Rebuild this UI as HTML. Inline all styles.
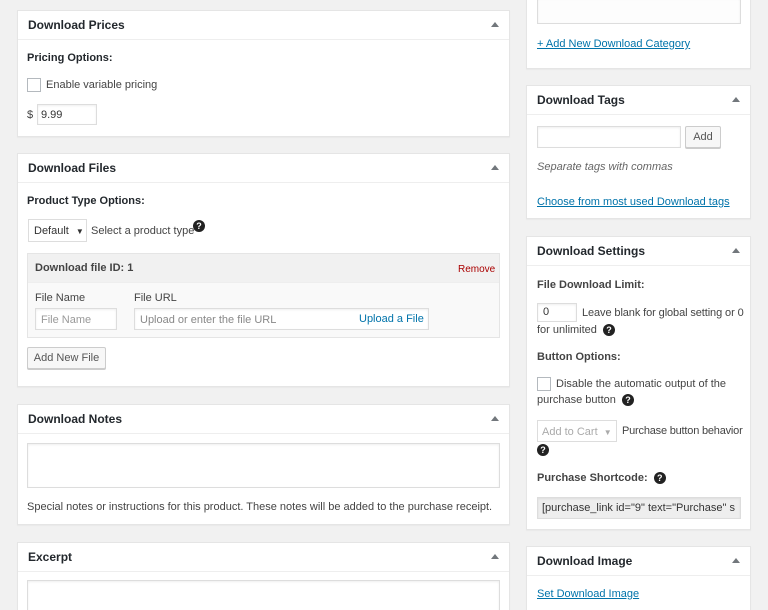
<!DOCTYPE html>
<html style="overflow:hidden;width:768px;height:610px"><head><meta charset="utf-8"><style>
*{box-sizing:border-box;margin:0;padding:0}
body{width:768px;height:610px;overflow:hidden;background:#f1f1f1;font-family:"Liberation Sans",sans-serif;font-size:11px;color:#444;position:relative}
.p{position:absolute;background:#fff;border:1px solid #e5e5e5;box-shadow:0 1px 1px rgba(0,0,0,.04)}
.h{position:absolute;left:0;right:0;top:0;border-bottom:1px solid #eee;font-size:12px;font-weight:bold;color:#23282d;padding-left:10px}
.h:after{content:"";position:absolute;right:10px;top:50%;margin-top:-3px;border-left:4px solid transparent;border-right:4px solid transparent;border-bottom:5px solid #72777c}
.a{position:absolute;white-space:nowrap}
.in{position:absolute;border:1px solid #ddd;box-shadow:inset 0 1px 2px rgba(0,0,0,.07);background:#fff}
.b{font-weight:bold;color:#23282d}
.lk{color:#0073aa;text-decoration:underline}
.q{display:inline-block;width:12px;height:12px;border-radius:50%;background:#222;color:#fff;font-size:9px;font-weight:bold;text-align:center;line-height:12px;vertical-align:middle}
.btn{position:absolute;border:1px solid #ccc;background:#f7f7f7;box-shadow:0 1px 0 #ccc;border-radius:2px;text-align:center;color:#555}
.cb{position:absolute;width:14px;height:14px;border:1px solid #b4b9be;background:#fff}
</style></head><body>

<!-- Download Prices -->
<div class="p" style="left:17px;top:10px;width:493px;height:127px">
<div class="h" style="height:29px;line-height:29px">Download Prices</div>
</div>
<div class="a b" style="left:27px;top:52px">Pricing Options:</div>
<div class="cb" style="left:27px;top:78px"></div>
<div class="a" style="left:46px;top:79px">Enable variable pricing</div>
<div class="a" style="left:27px;top:109px">$</div>
<div class="in" style="left:37px;top:104px;width:60px;height:21px"></div>
<div class="a" style="left:41px;top:109px;color:#333">9.99</div>

<!-- Download Files -->
<div class="p" style="left:17px;top:153px;width:493px;height:234px">
<div class="h" style="height:29px;line-height:29px">Download Files</div>
</div>
<div class="a b" style="left:27px;top:195px">Product Type Options:</div>
<div class="in" style="left:28px;top:219px;width:59px;height:23px;box-shadow:none"></div>
<div class="a" style="left:34px;top:225px;color:#333">Default <span style="font-size:8px;margin-left:4px">▼</span></div>
<div class="a" style="left:91px;top:225px">Select a product type</div>
<div class="a" style="left:193px;top:220px"><span class="q">?</span></div>
<div style="position:absolute;left:27px;top:253px;width:473px;height:85px;border:1px solid #e5e5e5;background:#f9f9f9"></div>
<div style="position:absolute;left:28px;top:254px;width:471px;height:29px;background:#f1f1f1;border-bottom:1px solid #eee"></div>
<div class="a b" style="left:35px;top:262px;color:#444">Download file ID: 1</div>
<div class="a" style="left:458px;top:264px;color:#a00;font-size:10px">Remove</div>
<div class="a" style="left:35px;top:292px">File Name</div>
<div class="a" style="left:134px;top:292px">File URL</div>
<div class="in" style="left:35px;top:308px;width:82px;height:22px"></div>
<div class="a" style="left:41px;top:314px;color:#999">File Name</div>
<div class="in" style="left:134px;top:308px;width:295px;height:22px"></div>
<div class="a" style="left:140px;top:314px;color:#888">Upload or enter the file URL</div>
<div class="a" style="left:359px;top:313px;color:#0073aa">Upload a File</div>
<div class="btn" style="left:27px;top:347px;width:79px;height:22px;line-height:20px">Add New File</div>

<!-- Download Notes -->
<div class="p" style="left:17px;top:404px;width:493px;height:121px">
<div class="h" style="height:29px;line-height:29px">Download Notes</div>
</div>
<div class="in" style="left:27px;top:443px;width:473px;height:45px"></div>
<div class="a" style="left:27px;top:501px">Special notes or instructions for this product. These notes will be added to the purchase receipt.</div>

<!-- Excerpt -->
<div class="p" style="left:17px;top:542px;width:493px;height:80px">
<div class="h" style="height:29px;line-height:29px">Excerpt</div>
</div>
<div class="in" style="left:27px;top:580px;width:473px;height:40px"></div>

<!-- right top -->
<div class="p" style="left:526px;top:-5px;width:225px;height:74px"></div>
<div class="in" style="left:537px;top:-3px;width:204px;height:27px;background:#fdfdfd"></div>
<div class="a lk" style="left:537px;top:38px">+ Add New Download Category</div>

<!-- Download Tags -->
<div class="p" style="left:526px;top:85px;width:225px;height:134px">
<div class="h" style="height:29px;line-height:29px">Download Tags</div>
</div>
<div class="in" style="left:537px;top:126px;width:144px;height:22px"></div>
<div class="btn" style="left:685px;top:126px;width:36px;height:22px;line-height:20px">Add</div>
<div class="a" style="left:537px;top:161px;font-style:italic;color:#666">Separate tags with commas</div>
<div class="a lk" style="left:537px;top:196px">Choose from most used Download tags</div>

<!-- Download Settings -->
<div class="p" style="left:526px;top:236px;width:225px;height:294px">
<div class="h" style="height:29px;line-height:29px">Download Settings</div>
</div>
<div class="a b" style="left:537px;top:279px;color:#444">File Download Limit:</div>
<div class="in" style="left:537px;top:303px;width:40px;height:19px"></div>
<div class="a" style="left:543px;top:306px;color:#333">0</div>
<div class="a" style="left:582px;top:307px;letter-spacing:-0.1px">Leave blank for global setting or 0</div>
<div class="a" style="left:537px;top:324px">for unlimited <span class="q" style="margin-left:3px">?</span></div>
<div class="a b" style="left:537px;top:351px;color:#444">Button Options:</div>
<div class="cb" style="left:537px;top:377px"></div>
<div class="a" style="left:556px;top:378px">Disable the automatic output of the</div>
<div class="a" style="left:537px;top:394px">purchase button <span class="q" style="margin-left:3px">?</span></div>
<div class="in" style="left:537px;top:420px;width:80px;height:22px;box-shadow:none"></div>
<div class="a" style="left:542px;top:426px;color:#aaa">Add to Cart <span style="font-size:8px;margin-left:3px">▼</span></div>
<div class="a" style="left:622px;top:425px;letter-spacing:-0.2px">Purchase button behavior</div>
<div class="a" style="left:537px;top:444px"><span class="q">?</span></div>
<div class="a b" style="left:537px;top:472px;color:#444">Purchase Shortcode: <span class="q" style="margin-left:3px">?</span></div>
<div class="in" style="left:537px;top:497px;width:204px;height:22px;background:#eee;overflow:hidden"></div>
<div class="a" style="left:542px;top:502px;color:#333;width:196px;overflow:hidden">[purchase_link id="9" text="Purchase" s</div>

<!-- Download Image -->
<div class="p" style="left:526px;top:546px;width:225px;height:80px">
<div class="h" style="height:29px;line-height:29px">Download Image</div>
</div>
<div class="a lk" style="left:537px;top:588px">Set Download Image</div>

</body></html>
